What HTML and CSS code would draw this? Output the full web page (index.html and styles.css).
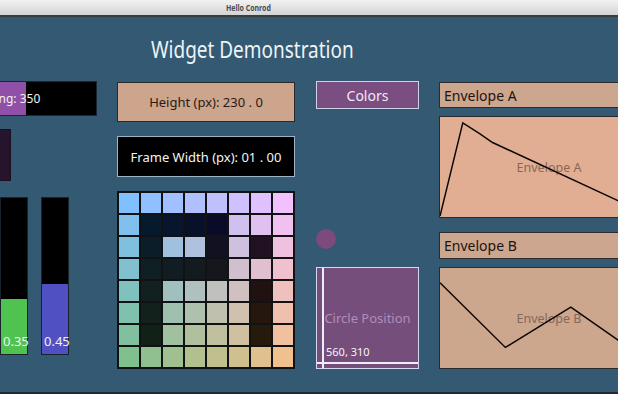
FILE: index.html
```html
<html>
<head>
    <title>Hello Conrod</title>
    <link rel="stylesheet" href="styles.css">
</head>
<body>
    <div class="titlebar"><span>Hello Conrod</span></div>
    <div class="window">
        <h1 class="heading"><span>Widget Demonstration</span></h1>
        <div class="board">
            <div class="col col-left">
                <div class="hslider">
                    <div class="hslider-fill" style="width: 79px"></div>
                    <span class="hslider-label">Spacing: 350</span>
                </div>
                <div class="dark-box"></div>
                <div class="vsliders">
                    <div class="vslider">
                        <div class="vslider-fill green" style="height: 35%"><span>0.35</span></div>
                    </div>
                    <div class="vslider">
                        <div class="vslider-fill blue" style="height: 45%"><span>0.45</span></div>
                    </div>
                </div>
            </div>

            <div class="col col-mid">
                <div class="dialer height">Height (px): 230 . 0</div>
                <div class="dialer frame">Frame Width (px): 01 . 00</div>
                <div class="matrix">
                    <div class="cell" style="background: rgb(128,192,255)"></div>
                    <div class="cell" style="background: rgb(144,192,255)"></div>
                    <div class="cell" style="background: rgb(160,192,255)"></div>
                    <div class="cell" style="background: rgb(176,192,255)"></div>
                    <div class="cell" style="background: rgb(192,192,255)"></div>
                    <div class="cell" style="background: rgb(208,192,255)"></div>
                    <div class="cell" style="background: rgb(224,192,255)"></div>
                    <div class="cell" style="background: rgb(240,192,255)"></div>

                    <div class="cell" style="background: rgb(128,192,239)"></div>
                    <div class="cell" style="background: rgb(6,26,45)"></div>
                    <div class="cell" style="background: rgb(7,22,44)"></div>
                    <div class="cell" style="background: rgb(9,17,42)"></div>
                    <div class="cell" style="background: rgb(10,10,41)"></div>
                    <div class="cell" style="background: rgb(208,192,239)"></div>
                    <div class="cell" style="background: rgb(224,192,239)"></div>
                    <div class="cell" style="background: rgb(240,192,239)"></div>

                    <div class="cell" style="background: rgb(128,192,223)"></div>
                    <div class="cell" style="background: rgb(11,29,40)"></div>
                    <div class="cell" style="background: rgb(160,192,223)"></div>
                    <div class="cell" style="background: rgb(176,192,223)"></div>
                    <div class="cell" style="background: rgb(17,17,34)"></div>
                    <div class="cell" style="background: rgb(208,192,223)"></div>
                    <div class="cell" style="background: rgb(34,17,34)"></div>
                    <div class="cell" style="background: rgb(240,192,223)"></div>

                    <div class="cell" style="background: rgb(128,192,207)"></div>
                    <div class="cell" style="background: rgb(15,31,36)"></div>
                    <div class="cell" style="background: rgb(17,29,34)"></div>
                    <div class="cell" style="background: rgb(19,26,32)"></div>
                    <div class="cell" style="background: rgb(22,22,29)"></div>
                    <div class="cell" style="background: rgb(208,192,207)"></div>
                    <div class="cell" style="background: rgb(224,192,207)"></div>
                    <div class="cell" style="background: rgb(240,192,207)"></div>

                    <div class="cell" style="background: rgb(128,192,191)"></div>
                    <div class="cell" style="background: rgb(18,33,32)"></div>
                    <div class="cell" style="background: rgb(160,192,191)"></div>
                    <div class="cell" style="background: rgb(176,192,191)"></div>
                    <div class="cell" style="background: rgb(192,192,191)"></div>
                    <div class="cell" style="background: rgb(208,192,191)"></div>
                    <div class="cell" style="background: rgb(34,17,17)"></div>
                    <div class="cell" style="background: rgb(240,192,191)"></div>

                    <div class="cell" style="background: rgb(128,192,175)"></div>
                    <div class="cell" style="background: rgb(18,33,28)"></div>
                    <div class="cell" style="background: rgb(160,192,175)"></div>
                    <div class="cell" style="background: rgb(176,192,175)"></div>
                    <div class="cell" style="background: rgb(192,192,175)"></div>
                    <div class="cell" style="background: rgb(208,192,175)"></div>
                    <div class="cell" style="background: rgb(37,22,14)"></div>
                    <div class="cell" style="background: rgb(240,192,175)"></div>

                    <div class="cell" style="background: rgb(128,192,159)"></div>
                    <div class="cell" style="background: rgb(18,33,23)"></div>
                    <div class="cell" style="background: rgb(160,192,159)"></div>
                    <div class="cell" style="background: rgb(176,192,159)"></div>
                    <div class="cell" style="background: rgb(192,192,159)"></div>
                    <div class="cell" style="background: rgb(208,192,159)"></div>
                    <div class="cell" style="background: rgb(38,26,12)"></div>
                    <div class="cell" style="background: rgb(240,192,159)"></div>

                    <div class="cell" style="background: rgb(128,192,143)"></div>
                    <div class="cell" style="background: rgb(144,192,143)"></div>
                    <div class="cell" style="background: rgb(160,192,143)"></div>
                    <div class="cell" style="background: rgb(176,192,143)"></div>
                    <div class="cell" style="background: rgb(192,192,143)"></div>
                    <div class="cell" style="background: rgb(208,192,143)"></div>
                    <div class="cell" style="background: rgb(224,192,143)"></div>
                    <div class="cell" style="background: rgb(240,192,143)"></div>
                </div>
            </div>

            <div class="col col-color">
                <div class="button">Colors</div>
                <div class="circle"></div>
                <div class="xypad">
                    <span class="xypad-label">Circle Position</span>
                    <div class="cross-v"></div>
                    <div class="cross-h"></div>
                    <span class="xypad-value">560, 310</span>
                </div>
            </div>

            <div class="col col-env">
                <div class="env-label">Envelope A</div>
                <div class="env-graph env-a">
                    <span>Envelope A</span>
                    <svg viewBox="0 0 220 102" preserveAspectRatio="none">
                        <polyline points="0,101 23,6 40,17 53,26 179,85 220,102" />
                    </svg>
                </div>
                <div class="env-label env-label-b">Envelope B</div>
                <div class="env-graph env-b">
                    <span>Envelope B</span>
                    <svg viewBox="0 0 220 102" preserveAspectRatio="none">
                        <polyline points="0,15 66,81 132,40 179,73 220,102" />
                    </svg>
                </div>
            </div>
        </div>
    </div>
</body>
</html>
```

FILE: styles.css
```css
body {
    margin: 0;
    width: 618px;
    height: 394px;
    overflow: hidden;
    font-family: "Noto Sans", "DejaVu Sans", sans-serif;
    background-color: #335973;
}

.titlebar {
    height: 15px;
    border-bottom: 2px solid #3a3d40;
    background: linear-gradient(#f2f2f2, #d4d4d4);
    display: flex;
    justify-content: center;
    align-items: center;
    padding-right: 122px;
    font-size: 8.5px;
    font-weight: bold;
    color: #4c4c4c;
}

.titlebar span {
    display: inline-block;
    transform: scaleX(0.82);
}

.window {
    height: 375px;
    border-bottom: 2px solid #1e2b34;
    color: #ffffff;
}

.heading {
    margin: 0;
    height: 63px;
    line-height: 63px;
    font-size: 24px;
    font-weight: normal;
    text-align: center;
    padding-right: 114px;
    color: #eef3f7;
}

.heading span {
    display: inline-block;
    transform: scaleX(0.79);
}

.board {
    display: flex;
    align-items: flex-start;
}

.col {
    display: flex;
    flex-direction: column;
    flex-shrink: 0;
}

/* left column hangs off the window edge */
.col-left {
    width: 151px;
    margin-left: -54px;
}

.hslider {
    position: relative;
    margin-top: 1px;
    height: 35px;
    box-sizing: border-box;
    border: 1px solid #1b2630;
    background-color: #000;
    display: flex;
    align-items: center;
    padding-left: 22px;
}

.hslider-fill {
    position: absolute;
    left: 0;
    top: 0;
    bottom: 0;
    background-color: #9150a7;
}

.hslider-label {
    position: relative;
    font-size: 12px;
    color: #f2f2f2;
}

.dark-box {
    margin-top: 13px;
    height: 52px;
    width: 65px;
    box-sizing: border-box;
    border: 1px solid #1b1020;
    background-color: #26132c;
}

.vsliders {
    margin-top: 16px;
    padding-left: 54px;
    display: flex;
    gap: 13px;
}

.vslider {
    width: 28px;
    height: 158px;
    box-sizing: border-box;
    border: 1px solid #17222b;
    background-color: #000;
    display: flex;
    flex-direction: column;
    justify-content: flex-end;
}

.vslider-fill {
    display: flex;
    align-items: flex-end;
    font-size: 13px;
    line-height: 13px;
}

.vslider-fill span {
    padding: 0 0 6px 2px;
    color: #eef4ee;
}

.vslider-fill.green {
    background-color: #4fc24f;
}

.vslider-fill.blue {
    background-color: #5150c2;
}

.col-mid {
    width: 178px;
    margin-left: 20px;
}

.dialer {
    box-sizing: border-box;
    display: flex;
    justify-content: center;
    align-items: center;
    font-size: 13px;
}

.dialer.height {
    margin-top: 2px;
    height: 40px;
    border: 1px solid #2a2a2a;
    background-color: #cda58d;
    color: #2a1a14;
}

.dialer.frame {
    margin-top: 14px;
    height: 41px;
    border: 1px solid #9fb3c6;
    background-color: #000;
    color: #f4f4f4;
}

.matrix {
    margin-top: 14px;
    width: 178px;
    height: 178px;
    box-sizing: border-box;
    padding: 2px;
    display: grid;
    grid-template-columns: repeat(8, 1fr);
    grid-template-rows: repeat(8, 1fr);
    gap: 2px;
    background-color: #101214;
}

.col-color {
    width: 103px;
    margin-left: 21px;
}

.button {
    margin-top: 1px;
    height: 28px;
    box-sizing: border-box;
    border: 1px solid #d0d2ea;
    background-color: #7a4e80;
    color: #f6e6f6;
    font-size: 14px;
    display: flex;
    justify-content: center;
    align-items: center;
}

.circle {
    margin-top: 120px;
    width: 20px;
    height: 20px;
    border-radius: 50%;
    background-color: #7c4a7c;
}

.xypad {
    position: relative;
    margin-top: 18px;
    height: 102px;
    box-sizing: border-box;
    border: 1px solid #d6d8ee;
    background-color: #754e7b;
    display: flex;
    justify-content: center;
    align-items: center;
}

.xypad-label {
    font-size: 13px;
    color: #b28cba;
}

.cross-v {
    position: absolute;
    left: 5px;
    top: 0;
    bottom: 0;
    width: 2px;
    background-color: #eceefa;
}

.cross-h {
    position: absolute;
    left: 0;
    right: 0;
    bottom: 4px;
    height: 2px;
    background-color: #eceefa;
}

.xypad-value {
    position: absolute;
    left: 9px;
    bottom: 9px;
    font-size: 11px;
    color: #f4f4f4;
}

.col-env {
    width: 220px;
    margin-left: 20px;
}

.env-label {
    margin-top: 2px;
    height: 26px;
    box-sizing: border-box;
    border: 1px solid #2c2c2c;
    background-color: #cca68e;
    color: #1e140e;
    font-size: 14px;
    display: flex;
    align-items: center;
    padding-left: 4px;
}

.env-label-b {
    margin-top: 14px;
    height: 27px;
}

.env-graph {
    position: relative;
    margin-top: 8px;
    height: 102px;
    box-sizing: border-box;
    border: 1px solid #2a2a2a;
    display: flex;
    justify-content: center;
    align-items: center;
    font-size: 12.5px;
    color: #8a6656;
}

.env-a {
    background-color: #e1ae94;
}

.env-b {
    background-color: #cda68e;
    color: #85685a;
}

.env-graph svg {
    position: absolute;
    left: 0;
    top: 0;
    width: 100%;
    height: 100%;
}

.env-graph polyline {
    fill: none;
    stroke: #0a0604;
    stroke-width: 1.5;
}
```
